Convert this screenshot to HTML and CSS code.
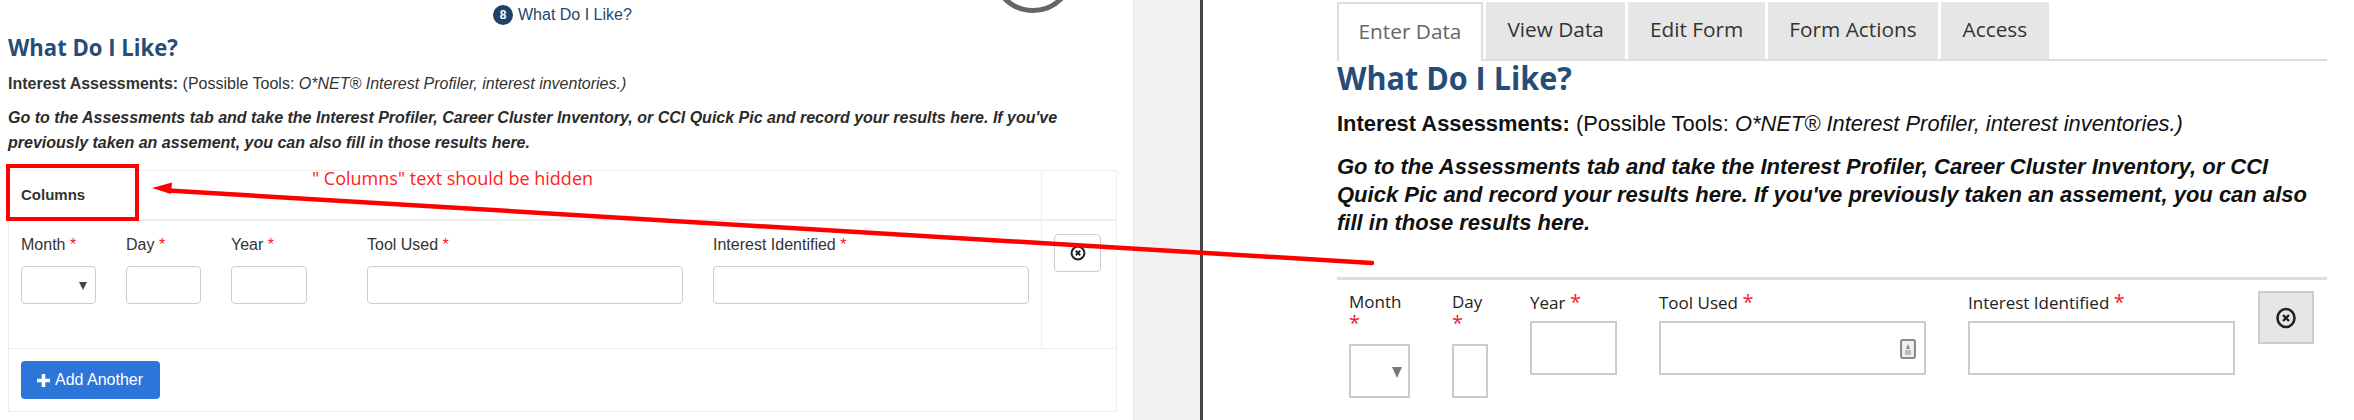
FILE: index.html
```html
<!DOCTYPE html>
<html lang="en">
<head>
    <meta charset="UTF-8">
    <title>What Do I Like?</title>
    <link rel="stylesheet" href="styles.css">
</head>
<body>
    <div class="before">
        <div class="steps">
            <span class="step-num">8</span>
            <span>What Do I Like?</span>
        </div>
        <div class="gauge"></div>
        <h2 class="title">What Do I Like?</h2>
        <p class="intro"><b>Interest Assessments:</b> (Possible Tools: <i>O*NET® Interest Profiler, interest inventories.)</i></p>
        <p class="note">Go to the Assessments tab and take the Interest Profiler, Career Cluster Inventory, or CCI Quick Pic and record your results here. If you've previously taken an assement, you can also fill in those results here.</p>

        <div class="grid">
            <div class="grid-head">
                <div class="grid-head-main">Columns</div>
                <div class="grid-head-side"></div>
            </div>
            <div class="grid-row">
                <div class="fields">
                    <div class="field w-month">
                        <label>Month <em>*</em></label>
                        <div class="input select-box"><span class="caret"></span></div>
                    </div>
                    <div class="field w-day">
                        <label>Day <em>*</em></label>
                        <div class="input"></div>
                    </div>
                    <div class="field w-year">
                        <label>Year <em>*</em></label>
                        <div class="input"></div>
                    </div>
                    <div class="field w-text">
                        <label>Tool Used <em>*</em></label>
                        <div class="input"></div>
                    </div>
                    <div class="field w-text">
                        <label>Interest Identified <em>*</em></label>
                        <div class="input"></div>
                    </div>
                </div>
                <div class="grid-side">
                    <button class="remove">
                        <svg width="16" height="16" viewBox="0 0 16 16"><circle cx="8" cy="8" r="6.4" fill="none" stroke="#222" stroke-width="2"/><path d="M5.8 5.8l4.4 4.4M10.200 5.800l-4.400 4.400" stroke="#222" stroke-width="2"/></svg>
                    </button>
                </div>
            </div>
            <div class="grid-foot">
                <button class="add">
                    <svg width="13" height="13" viewBox="0 0 13 13"><path d="M4.700 0h3.600v4.700H13v3.600H8.300V13H4.700V8.300H0V4.700h4.700z" fill="#fff"/></svg>
                    Add Another
                </button>
            </div>
        </div>
    </div>

    <div class="gutter"></div>

    <div class="after">
        <div class="tabs">
            <div class="tab active">Enter Data</div>
            <div class="tab">View Data</div>
            <div class="tab">Edit Form</div>
            <div class="tab">Form Actions</div>
            <div class="tab">Access</div>
        </div>
        <h2 class="title-big">What Do I Like?</h2>
        <p class="intro-big"><b>Interest Assessments:</b> (Possible Tools: <i>O*NET® Interest Profiler, interest inventories.)</i></p>
        <p class="note-big">Go to the Assessments tab and take the Interest Profiler, Career Cluster Inventory, or CCI Quick Pic and record your results here. If you've previously taken an assement, you can also fill in those results here.</p>

        <div class="form-row">
            <div class="cell c-month">
                <label>Month <em>*</em></label>
                <div class="box select-box"><span class="caret grey"></span></div>
            </div>
            <div class="cell c-day">
                <label>Day <em>*</em></label>
                <div class="box"></div>
            </div>
            <div class="cell c-year">
                <label>Year <em>*</em></label>
                <div class="box"></div>
            </div>
            <div class="cell c-text">
                <label>Tool Used <em>*</em></label>
                <div class="box key-box">
                    <svg width="16" height="20" viewBox="0 0 16 20"><rect x="1" y="1" width="14" height="18" rx="2" fill="#eee" stroke="#8a8a8a" stroke-width="2"/><path d="M8 5l2 5H6z" fill="#888"/><rect x="5" y="11" width="6" height="5" fill="#bbb"/></svg>
                </div>
            </div>
            <div class="cell c-text">
                <label>Interest Identified <em>*</em></label>
                <div class="box"></div>
            </div>
            <button class="remove-big">
                <svg width="20" height="22" viewBox="0 0 20 22"><ellipse cx="10" cy="11" rx="8.500" ry="9" fill="none" stroke="#222" stroke-width="2.600"/><path d="M7 8l6 6M13 8l-6 6" stroke="#222" stroke-width="2.400"/></svg>
            </button>
        </div>
    </div>

    <div class="callout"></div>
    <div class="callout-text">" Columns" text should be hidden</div>
    <svg class="arrow" width="2354" height="420" viewBox="0 0 2354 420">
        <path d="M168 190.500L1372 263" stroke="#f00" stroke-width="4.500" stroke-linecap="round"/>
        <path d="M152 188L172 182.500L171 194z" fill="#f00"/>
    </svg>
</body>
</html>
```

FILE: styles.css
```css
* {
    box-sizing: border-box;
}
html, body {
    margin: 0;
    height: 420px;
    overflow: hidden;
}
body {
    display: flex;
    position: relative;
    background-color: #fff;
    font-family: "Liberation Sans", Arial, sans-serif;
    color: #333;
}
p, h2 {
    margin: 0;
}
em {
    color: #f0202a;
    font-style: normal;
}
button {
    font-family: inherit;
    cursor: pointer;
}

/* left: the form as it is now */
.before {
    width: 1133px;
    padding: 0 16px 0 8px;
    flex: none;
}
.steps {
    display: flex;
    align-items: center;
    height: 29px;
    padding-left: 485px;
    gap: 5px;
    font-size: 16px;
    color: #25476f;
}
.step-num {
    width: 20px;
    height: 20px;
    border-radius: 50%;
    background-color: #1d4468;
    color: #fff;
    font-size: 12px;
    font-weight: bold;
    text-align: center;
    line-height: 20px;
}
.gauge {
    position: absolute;
    left: 991px;
    top: -71px;
    width: 84px;
    height: 84px;
    border: 5px solid #666;
    border-radius: 50%;
}
.title {
    margin-top: 1px;
    font-family: "Open Sans", sans-serif;
    font-size: 24px;
    font-weight: 700;
    line-height: 33px;
    color: #264c78;
    transform: scaleX(0.92);
    transform-origin: left center;
}
.intro {
    margin-top: 8px;
    font-size: 16px;
    line-height: 25px;
}
.note {
    margin-top: 9px;
    font-size: 16px;
    font-weight: bold;
    font-style: italic;
    line-height: 25px;
    color: #2b2b2b;
}
.grid {
    margin-top: 15px;
    border: 1px solid #eee;
    height: 242px;
}
.grid-head {
    display: flex;
    height: 50px;
    border-bottom: 2px solid #eee;
}
.grid-head-main {
    width: 1033px;
    padding: 15px 12px;
    font-size: 15px;
    font-weight: bold;
    border-right: 1px solid #eee;
}
.grid-row {
    display: flex;
    height: 128px;
    border-bottom: 1px solid #eee;
}
.fields {
    display: flex;
    width: 1033px;
    padding: 14px 12px 0;
    gap: 30px;
    border-right: 1px solid #eee;
}
.field label {
    display: block;
    height: 31px;
    font-size: 16px;
    line-height: 20px;
}
.w-month, .w-day {
    width: 75px;
}
.w-year {
    width: 76px;
    margin-right: 30px;
}
.w-text {
    width: 316px;
}
.input {
    position: relative;
    height: 38px;
    border: 1px solid #ccc;
    border-radius: 4px;
    background-color: #fff;
}
.caret {
    position: absolute;
    right: 8px;
    top: 15px;
    border-left: 4px solid transparent;
    border-right: 4px solid transparent;
    border-top: 8px solid #444;
}
.grid-side {
    padding: 13px 12px;
}
.remove {
    display: flex;
    align-items: center;
    justify-content: center;
    width: 47px;
    height: 38px;
    padding: 0;
    border: 1px solid #ccc;
    border-radius: 4px;
    background-color: #fff;
}
.grid-foot {
    padding: 12px;
}
.add {
    display: flex;
    align-items: center;
    gap: 5px;
    width: 139px;
    height: 38px;
    padding: 0 16px;
    border: 0;
    border-radius: 4px;
    background-color: #2d76d9;
    color: #fff;
    font-size: 16px;
    white-space: nowrap;
}

.gutter {
    width: 70px;
    flex: none;
    background-color: #f1f1f1;
    border-left: 1px solid #e8e8e8;
    border-right: 3px solid #444;
}

/* right: the same form on the new page */
.after {
    flex: 1;
    padding: 2px 27px 0 134px;
    color: #111;
}
.tabs {
    display: flex;
    gap: 3px;
    height: 59px;
    border-bottom: 2px solid #ddd;
}
.tab {
    height: 57px;
    padding: 0 21.500px;
    margin-bottom: -2px;
    background-color: #e6e6e6;
    font-family: "Open Sans", sans-serif;
    font-size: 20.800px;
    line-height: 54px;
    color: #333;
}
.tab.active {
    height: 59px;
    background-color: #fff;
    border: 2px solid #ddd;
    border-bottom: 0;
    padding: 0 19.500px;
    color: #666;
}
.title-big {
    font-family: "Open Sans", sans-serif;
    font-size: 33px;
    font-weight: 700;
    line-height: 45px;
    color: #264c78;
    margin-top: -6px;
    transform: scaleX(0.925);
    transform-origin: left center;
}
.intro-big {
    margin-top: 8px;
    font-size: 21.900px;
    line-height: 32px;
}
.note-big {
    margin-top: 13px;
    font-size: 22px;
    font-weight: bold;
    font-style: italic;
    line-height: 28px;
}
.form-row {
    display: flex;
    align-items: flex-start;
    gap: 42px;
    margin-top: 40px;
    padding: 11px 12px 0;
    border-top: 3px solid #ddd;
}
.cell label {
    display: block;
    font-family: "Open Sans", sans-serif;
    font-size: 17px;
    line-height: 21px;
    margin-bottom: 8px;
    color: #222;
}
.cell em {
    font-size: 20px;
}
.c-month label, .c-day label {
    margin-bottom: 10px;
}
.box {
    position: relative;
    height: 54px;
    border: 2px solid #ccc;
    background-color: #fff;
}
.box .caret {
    right: 6px;
    top: 21px;
    border-left-width: 5px;
    border-right-width: 5px;
    border-top-width: 11px;
}
.caret.grey {
    border-top-color: #777;
}
.c-month {
    width: 61px;
}
.c-day {
    width: 36px;
}
.c-year {
    width: 87px;
}
.c-text {
    width: 267px;
}
.key-box svg {
    position: absolute;
    right: 8px;
    top: 16px;
}
.remove-big {
    display: flex;
    align-items: center;
    justify-content: center;
    width: 56px;
    height: 53px;
    margin-left: -19px;
    padding: 0;
    border: 2px solid #ccc;
    background-color: #e6e6e6;
}

/* annotations drawn over the screenshot */
.callout {
    position: absolute;
    left: 6px;
    top: 164px;
    width: 133px;
    height: 57px;
    border: 4px solid #f00;
}
.callout-text {
    position: absolute;
    left: 312px;
    top: 166px;
    font-family: "Open Sans", sans-serif;
    font-size: 18px;
    line-height: 24px;
    color: #f22;
}
.arrow {
    position: absolute;
    left: 0;
    top: 0;
}
```
